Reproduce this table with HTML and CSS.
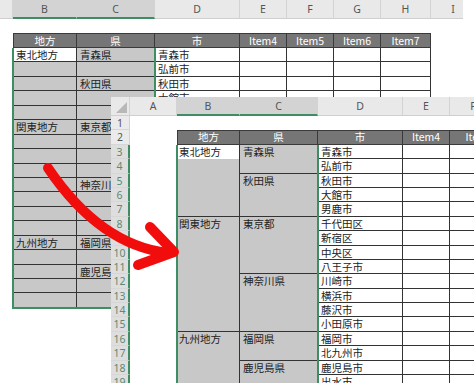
FILE: index.html
```html
<!DOCTYPE html>
<html lang="ja">
<head>
<meta charset="utf-8">
<link rel="stylesheet" href="styles.css">
</head>
<body>
<div class="sheet back">
  <div class="ch"></div>
  <div class="ch sel">B</div>
  <div class="ch sel">C</div>
  <div class="ch">D</div>
  <div class="ch">E</div>
  <div class="ch">F</div>
  <div class="ch">G</div>
  <div class="ch">H</div>
  <div class="ch">I</div>
  <div class="spacer"></div>

  <div class="th first">地方</div><div class="th">県</div><div class="th">市</div><div class="th">Item4</div><div class="th">Item5</div><div class="th">Item6</div><div class="th">Item7</div>

  <div class="td first w">東北地方</div><div class="td g">青森県</div><div class="td">青森市</div><div class="td"></div><div class="td"></div><div class="td"></div><div class="td"></div>
  <div class="td first g"></div><div class="td g"></div><div class="td">弘前市</div><div class="td"></div><div class="td"></div><div class="td"></div><div class="td"></div>
  <div class="td first g"></div><div class="td g">秋田県</div><div class="td">秋田市</div><div class="td"></div><div class="td"></div><div class="td"></div><div class="td"></div>
  <div class="td first g"></div><div class="td g"></div><div class="td">大館市</div><div class="td"></div><div class="td"></div><div class="td"></div><div class="td"></div>
  <div class="td first g"></div><div class="td g"></div><div class="td">男鹿市</div><div class="td"></div><div class="td"></div><div class="td"></div><div class="td"></div>
  <div class="td first g">関東地方</div><div class="td g">東京都</div><div class="td">千代田区</div><div class="td"></div><div class="td"></div><div class="td"></div><div class="td"></div>
  <div class="td first g"></div><div class="td g"></div><div class="td">新宿区</div><div class="td"></div><div class="td"></div><div class="td"></div><div class="td"></div>
  <div class="td first g"></div><div class="td g"></div><div class="td">中央区</div><div class="td"></div><div class="td"></div><div class="td"></div><div class="td"></div>
  <div class="td first g"></div><div class="td g"></div><div class="td">八王子市</div><div class="td"></div><div class="td"></div><div class="td"></div><div class="td"></div>
  <div class="td first g"></div><div class="td g">神奈川県</div><div class="td">川崎市</div><div class="td"></div><div class="td"></div><div class="td"></div><div class="td"></div>
  <div class="td first g"></div><div class="td g"></div><div class="td">横浜市</div><div class="td"></div><div class="td"></div><div class="td"></div><div class="td"></div>
  <div class="td first g"></div><div class="td g"></div><div class="td">藤沢市</div><div class="td"></div><div class="td"></div><div class="td"></div><div class="td"></div>
  <div class="td first g"></div><div class="td g"></div><div class="td">小田原市</div><div class="td"></div><div class="td"></div><div class="td"></div><div class="td"></div>
  <div class="td first g">九州地方</div><div class="td g">福岡県</div><div class="td">福岡市</div><div class="td"></div><div class="td"></div><div class="td"></div><div class="td"></div>
  <div class="td first g"></div><div class="td g"></div><div class="td">北九州市</div><div class="td"></div><div class="td"></div><div class="td"></div><div class="td"></div>
  <div class="td first g"></div><div class="td g">鹿児島県</div><div class="td">鹿児島市</div><div class="td"></div><div class="td"></div><div class="td"></div><div class="td"></div>
  <div class="td first g"></div><div class="td g"></div><div class="td">出水市</div><div class="td"></div><div class="td"></div><div class="td"></div><div class="td"></div>
  <div class="td first g"></div><div class="td g"></div><div class="td">霧島市</div><div class="td"></div><div class="td"></div><div class="td"></div><div class="td"></div>
  <div class="selection back-sel"></div>
</div>

<div class="sheet front">
  <div class="corner"><span class="tri"></span></div>
  <div class="colhdrs">
    <div class="fch wA">A</div>
    <div class="fch wB sel">B</div>
    <div class="fch wC sel">C</div>
    <div class="fch wD">D</div>
    <div class="fch wE">E</div>
    <div class="fch wE">F</div>
  </div>
  <div class="rowhdrs">
    <div class="rh">1</div><div class="rh">2</div>
    <div class="rh sel">3</div><div class="rh sel">4</div><div class="rh sel">5</div><div class="rh sel">6</div>
    <div class="rh sel">7</div><div class="rh sel">8</div><div class="rh sel">9</div><div class="rh sel">10</div>
    <div class="rh sel">11</div><div class="rh sel">12</div><div class="rh sel">13</div><div class="rh sel">14</div>
    <div class="rh sel">15</div><div class="rh sel">16</div><div class="rh sel">17</div><div class="rh sel">18</div>
    <div class="rh sel">19</div><div class="rh sel">20</div>
  </div>
  <div class="body">
    <div class="spacer"></div>
    <div class="fth cB">地方</div><div class="fth cC">県</div><div class="fth cD">市</div><div class="fth cE">Item4</div><div class="fth cF">Item5</div>

    <div class="fc cB w">東北地方</div><div class="fc cC g s2">青森県</div><div class="fc cD">青森市</div><div class="fc cE"></div><div class="fc cF"></div>
    <div class="fc cB g s4"></div><div class="fc cD">弘前市</div><div class="fc cE"></div><div class="fc cF"></div>
    <div class="fc cC g s3">秋田県</div><div class="fc cD">秋田市</div><div class="fc cE"></div><div class="fc cF"></div>
    <div class="fc cD">大館市</div><div class="fc cE"></div><div class="fc cF"></div>
    <div class="fc cD">男鹿市</div><div class="fc cE"></div><div class="fc cF"></div>
    <div class="fc cB g s8">関東地方</div><div class="fc cC g s4">東京都</div><div class="fc cD">千代田区</div><div class="fc cE"></div><div class="fc cF"></div>
    <div class="fc cD">新宿区</div><div class="fc cE"></div><div class="fc cF"></div>
    <div class="fc cD">中央区</div><div class="fc cE"></div><div class="fc cF"></div>
    <div class="fc cD">八王子市</div><div class="fc cE"></div><div class="fc cF"></div>
    <div class="fc cC g s4">神奈川県</div><div class="fc cD">川崎市</div><div class="fc cE"></div><div class="fc cF"></div>
    <div class="fc cD">横浜市</div><div class="fc cE"></div><div class="fc cF"></div>
    <div class="fc cD">藤沢市</div><div class="fc cE"></div><div class="fc cF"></div>
    <div class="fc cD">小田原市</div><div class="fc cE"></div><div class="fc cF"></div>
    <div class="fc cB g s5">九州地方</div><div class="fc cC g s2">福岡県</div><div class="fc cD">福岡市</div><div class="fc cE"></div><div class="fc cF"></div>
    <div class="fc cD">北九州市</div><div class="fc cE"></div><div class="fc cF"></div>
    <div class="fc cC g s3">鹿児島県</div><div class="fc cD">鹿児島市</div><div class="fc cE"></div><div class="fc cF"></div>
    <div class="fc cD">出水市</div><div class="fc cE"></div><div class="fc cF"></div>
    <div class="fc cD">霧島市</div><div class="fc cE"></div><div class="fc cF"></div>
    <div class="selection front-sel"></div>
  </div>
</div>

<svg class="arrow" width="474" height="383" viewBox="0 0 474 383" aria-hidden="true">
  <path d="M48 168 Q100 245 168 253" fill="none" stroke="#f20d0d" stroke-width="10" stroke-linecap="round"/>
  <path d="M150 227 L174 252 L138 265" fill="none" stroke="#f20d0d" stroke-width="10" stroke-linecap="round" stroke-linejoin="round"/>
</svg>
</body>
</html>
```

FILE: styles.css
```css
* { box-sizing: border-box; }
html, body { margin: 0; padding: 0; }
body {
  width: 474px;
  height: 383px;
  position: relative;
  overflow: hidden;
  background: #fff;
  font-family: "Noto Sans CJK JP", "Noto Sans", sans-serif;
  font-size: 10.5px;
  color: #222;
}

.sheet { position: absolute; overflow: hidden; }

/* ---------- back sheet ---------- */
.back {
  left: 0;
  top: 0;
  width: 463px;
  height: 320px;
  display: grid;
  grid-template-columns: 13px 64px 78px 85px 47px 47px 47px 50px 45px;
  grid-template-rows: 19px 14px 15px repeat(18, 14.44px);
}
.ch {
  background: #e9e9e9;
  border-right: 1px solid #d3d3d3;
  border-bottom: 1px solid #cfcfcf;
  display: flex;
  align-items: center;
  justify-content: center;
  font-family: "Noto Sans", sans-serif;
  font-size: 10.5px;
  color: #555;
}
.ch.sel {
  background: #d3d3d3;
  border-bottom: 2px solid #3f8d62;
}
.spacer { grid-column: 1 / -1; }
.first { grid-column-start: 2; }

.th {
  background: #767676;
  color: #fff;
  text-align: center;
  line-height: 13px;
  border-right: 1px solid #3a3a3a;
  border-top: 1px solid #3a3a3a;
  border-bottom: 1px solid #3a3a3a;
  white-space: nowrap;
}
.th.first { border-left: 1px solid #3a3a3a; }
.td {
  background: #fff;
  border-right: 1px solid #333;
  border-bottom: 1px solid #333;
  line-height: 13px;
  padding-left: 3px;
  white-space: nowrap;
  overflow: hidden;
}
.td.g { background: #c8c8c8; }
.td.w { background: #fff; }

.selection {
  position: absolute;
  top: 0;
  bottom: 0;
  left: -1px;
  right: -1px;
  pointer-events: none;
  z-index: 2;
}
.back-sel {
  grid-column: 2 / 4;
  grid-row: 4 / 22;
  border-left: 2px solid #3f8d62;
  border-right: 2px solid #3f8d62;
  border-bottom: 2px solid #3f8d62;
  bottom: -1px;
}

/* ---------- front sheet ---------- */
.front {
  left: 111px;
  top: 97px;
  width: 363px;
  height: 286px;
  background: #fff;
  display: grid;
  grid-template-columns: 19px 1fr;
  grid-template-rows: 19px 1fr;
  z-index: 3;
}
.corner {
  background: #e9e9e9;
  border-right: 1px solid #d3d3d3;
  border-bottom: 1px solid #cfcfcf;
  display: flex;
  align-items: flex-end;
  justify-content: flex-end;
  padding: 0 2px 2px 0;
}
.tri {
  width: 0;
  height: 0;
  border-left: 11px solid transparent;
  border-bottom: 11px solid #b8b8b8;
}
.colhdrs {
  display: flex;
  overflow: hidden;
  background: #e9e9e9;
}
.fch {
  flex: none;
  background: #e9e9e9;
  border-right: 1px solid #d3d3d3;
  border-bottom: 1px solid #cfcfcf;
  display: flex;
  align-items: center;
  justify-content: center;
  font-family: "Noto Sans", sans-serif;
  font-size: 10.5px;
  color: #555;
}
.fch.sel {
  background: #d3d3d3;
  border-bottom: 2px solid #3f8d62;
}
.wA { width: 47px; }
.wB { width: 63px; }
.wC { width: 78px; }
.wD { width: 85px; }
.wE { width: 47px; }

.rowhdrs {
  display: flex;
  flex-direction: column;
  overflow: hidden;
}
.rh {
  flex: none;
  height: 14.4px;
  background: #ebebeb;
  border-bottom: 1px solid #d6d6d6;
  border-right: 1px solid #d3d3d3;
  font-family: "Noto Sans", sans-serif;
  font-size: 10.5px;
  line-height: 14px;
  text-align: center;
  color: #555;
}
.rh.sel {
  background: #dedede;
  color: #5f8a72;
  border-right: 2px solid #3f8d62;
}

.body {
  position: relative;
  display: grid;
  grid-template-columns: 47px 63px 78px 85px 47px 60px;
  grid-template-rows: repeat(20, 14.4px);
  overflow: hidden;
}
.cB { grid-column: 2; }
.cC { grid-column: 3; }
.cD { grid-column: 4; }
.cE { grid-column: 5; }
.cF { grid-column: 6; }
.s2 { grid-row-end: span 2; }
.s3 { grid-row-end: span 3; }
.s4 { grid-row-end: span 4; }
.s5 { grid-row-end: span 5; }
.s8 { grid-row-end: span 8; }

.fth {
  background: #767676;
  color: #fff;
  text-align: center;
  line-height: 12.4px;
  border-right: 1px solid #3a3a3a;
  border-top: 1px solid #3a3a3a;
  border-bottom: 1px solid #3a3a3a;
  white-space: nowrap;
}
.fth.cB { border-left: 1px solid #3a3a3a; }
.fc {
  background: #fff;
  border-right: 1px solid #333;
  border-bottom: 1px solid #333;
  line-height: 13px;
  padding-left: 3px;
  white-space: nowrap;
  overflow: hidden;
}
.fc.g { background: #c8c8c8; }
.fc.w { background: #fff; border-bottom: none; }
.fc.cB { padding-left: 2px; }

.front-sel {
  grid-column: 2 / 4;
  grid-row: 3 / 21;
  border-left: 2px solid #3f8d62;
  border-right: 2px solid #3f8d62;
}

/* ---------- arrow ---------- */
.arrow {
  position: absolute;
  left: 0;
  top: 0;
  z-index: 5;
}
```
